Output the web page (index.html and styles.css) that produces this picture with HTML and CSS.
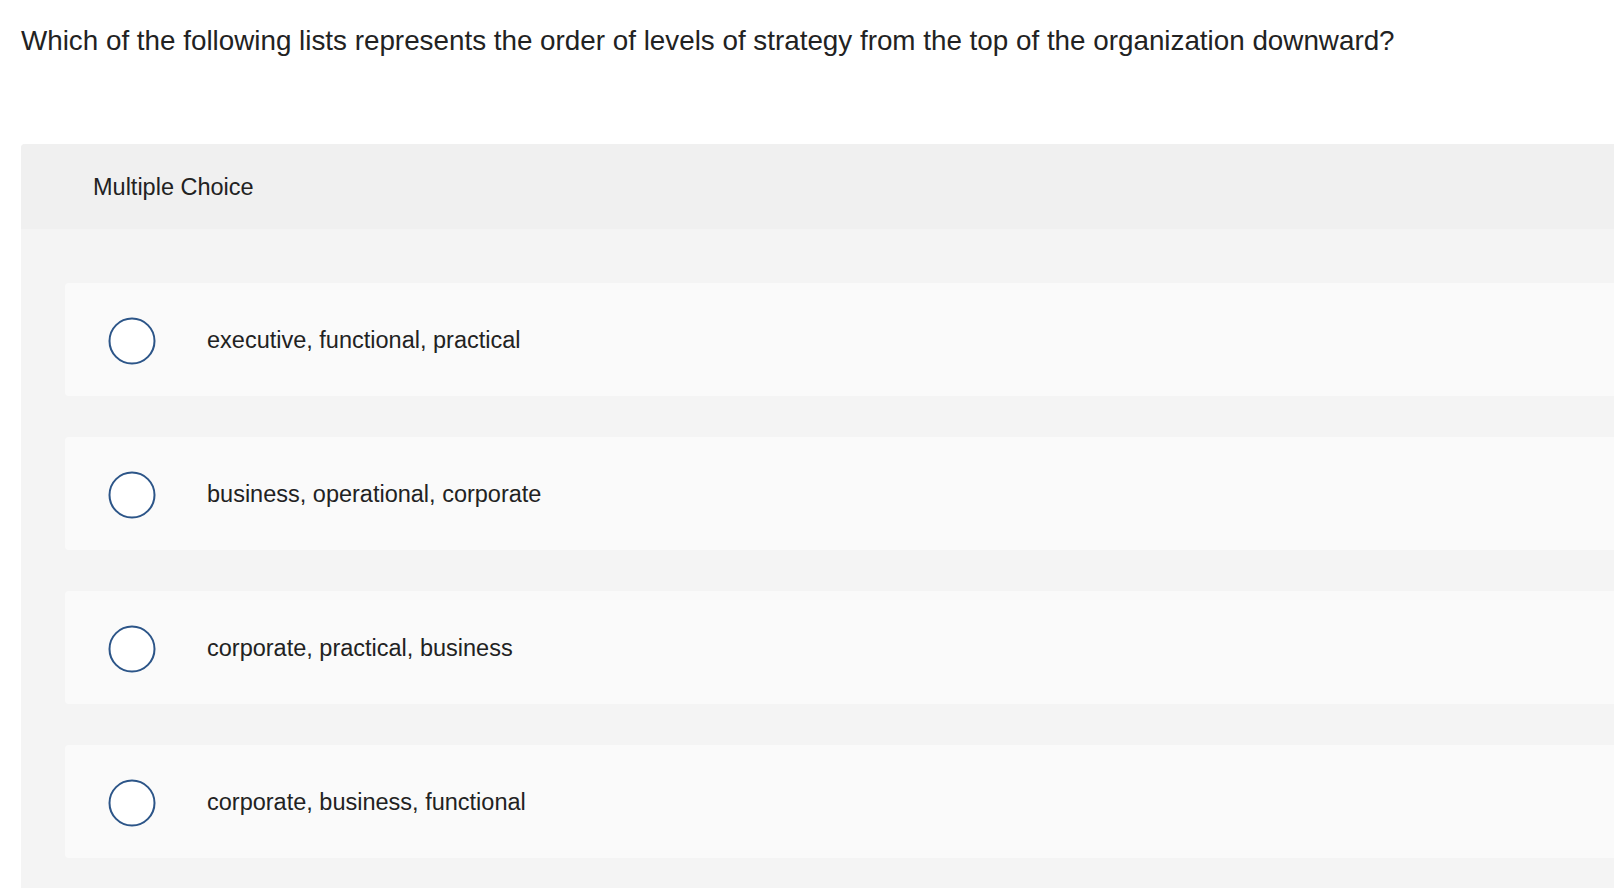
FILE: index.html
```html
<!DOCTYPE html>
<html lang="en">
<head>
<meta charset="utf-8"/>
<title>Multiple Choice Question</title>
<link rel="stylesheet" href="styles.css">
</head>
<body>
<div class="question">Which of the following lists represents the order of levels of strategy from the top of the organization downward?</div>
<div class="answer-box">
  <div class="answer-header">Multiple Choice</div>
  <div class="answer-list">
    <label class="choice">
      <svg class="radio" width="48" height="48" viewBox="0 0 48 48"><circle cx="24" cy="24" r="22.5" fill="#fff" stroke="#2c5588" stroke-width="2"/></svg>
      <span class="choice-text">executive, functional, practical</span>
    </label>
    <label class="choice">
      <svg class="radio" width="48" height="48" viewBox="0 0 48 48"><circle cx="24" cy="24" r="22.5" fill="#fff" stroke="#2c5588" stroke-width="2"/></svg>
      <span class="choice-text">business, operational, corporate</span>
    </label>
    <label class="choice">
      <svg class="radio" width="48" height="48" viewBox="0 0 48 48"><circle cx="24" cy="24" r="22.5" fill="#fff" stroke="#2c5588" stroke-width="2"/></svg>
      <span class="choice-text">corporate, practical, business</span>
    </label>
    <label class="choice">
      <svg class="radio" width="48" height="48" viewBox="0 0 48 48"><circle cx="24" cy="24" r="22.5" fill="#fff" stroke="#2c5588" stroke-width="2"/></svg>
      <span class="choice-text">corporate, business, functional</span>
    </label>
  </div>
</div>
</body>
</html>
```

FILE: styles.css
```css
body {
  margin: 0;
  background: #fff;
  font-family: "Liberation Sans", Arial, sans-serif;
  color: #222;
  overflow: hidden;
}
.question {
  padding: 25px 0 0 21px;
  font-size: 27.8px;
  line-height: 32px;
  height: 119px;
}
.answer-box {
  margin-left: 21px;
  margin-right: -40px;
  background: #f4f4f4;
  border-radius: 4px 0 0 0;
  overflow: hidden;
}
.answer-header {
  background: #f0f0f0;
  height: 85px;
  display: flex;
  align-items: center;
  padding: 2px 0 0 72px;
  box-sizing: border-box;
  font-size: 23.5px;
}
.answer-list {
  display: flex;
  flex-direction: column;
  gap: 41px;
  padding: 54px 0 40px 44px;
}
.choice {
  display: flex;
  align-items: center;
  height: 113px;
  background: #fafafa;
  border-radius: 4px 0 0 4px;
  padding: 2px 0 0 43px;
  box-sizing: border-box;
}
.radio {
  flex-shrink: 0;
  margin-right: 51px;
}
.choice-text {
  font-size: 23.5px;
}
```
